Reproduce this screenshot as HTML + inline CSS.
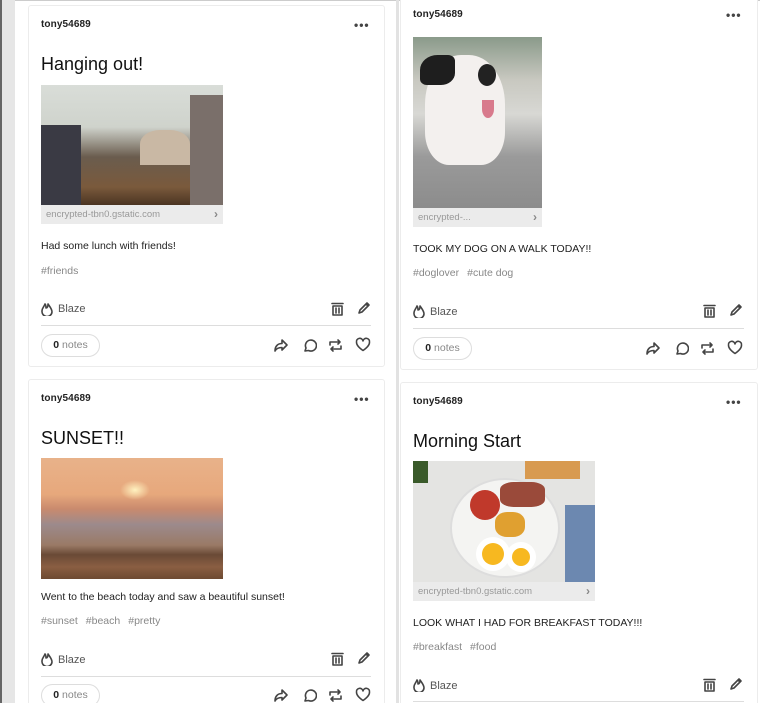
<!DOCTYPE html>
<html><head><meta charset="utf-8"><style>
*{margin:0;padding:0;box-sizing:border-box}
html,body{width:760px;height:703px;overflow:hidden}
body{background:#fff;position:relative;font-family:"Liberation Sans",sans-serif;color:#222}
.a{position:absolute}
.card{position:absolute;background:#fff;border:1px solid #ececec;border-radius:3px}
.user{position:absolute;font-size:10px;font-weight:bold;color:#222;letter-spacing:.1px}
.dots{position:absolute;font-size:12px;font-weight:bold;letter-spacing:1px;color:#444;line-height:6px}
.title{position:absolute;font-size:18px;color:#111}
.txt{position:absolute;font-size:10.5px;color:#222}
.tags{position:absolute;font-size:10.5px;color:#888}
.tags span{margin-right:8px}
.cap{position:absolute;background:#ebebeb;color:#999;font-size:9.5px;padding-left:5px;line-height:19px}
.cap b{position:absolute;right:5px;top:0;color:#888;font-weight:bold;font-size:12px}
.blaze{position:absolute;font-size:11px;color:#555;line-height:14px}
.hr{position:absolute;height:1px;background:#ddd}
.pill{position:absolute;width:59px;height:23px;border:1px solid #ddd;border-radius:12px;font-size:10.5px;color:#888;text-align:center;line-height:21px}
.pill b{color:#222}
svg{position:absolute;fill:none;stroke:#444;stroke-width:1.6;stroke-linecap:round;stroke-linejoin:round}
</style></head><body>
<div class="a" style="left:0;top:0;width:2px;height:703px;background:#666"></div>
<div class="a" style="left:2px;top:0;width:13px;height:703px;background:#e6e6e6"></div>
<div class="a" style="left:15px;top:0;width:745px;height:1px;background:#ccc"></div>
<div class="a" style="left:396px;top:0;width:3px;height:703px;background:#e2e2e2"></div>

<!-- Card 1 -->
<div class="card" style="left:28px;top:5px;width:357px;height:362px"></div>
<div class="user" style="left:41px;top:19px">tony54689</div>
<div class="dots" style="left:354px;top:22px">•••</div>
<div class="title" style="left:41px;top:54px">Hanging out!</div>
<div class="a" style="left:41px;top:85px;width:182px;height:120px;background:linear-gradient(180deg,#d9ddd8 0%,#cfd3cc 35%,#6a5c4e 60%,#7a5a3c 85%,#4b3422 100%)"></div>
<div class="a" style="left:41px;top:125px;width:40px;height:80px;background:#3a3a44"></div>
<div class="a" style="left:190px;top:95px;width:33px;height:110px;background:#7a6f6a"></div>
<div class="a" style="left:140px;top:130px;width:50px;height:35px;background:#c9b8a4;border-radius:40% 40% 0 0"></div>
<div class="cap" style="left:41px;top:205px;width:182px;height:19px">encrypted-tbn0.gstatic.com<b>›</b></div>
<div class="txt" style="left:41px;top:240px">Had some lunch with friends!</div>
<div class="tags" style="left:41px;top:265px"><span>#friends</span></div>
<svg style="left:41px;top:302px" width="13" height="14" viewBox="0 0 13 14"><path d="M4 2C3 5 1 6 1 9a5 5 0 0 0 10 1c0-3-2-5-4-8c0 3-1 4-2 4C5 5 5 3 4 2Z"/></svg>
<div class="blaze" style="left:58px;top:302px">Blaze</div>
<svg style="left:331px;top:302px" width="13" height="14" viewBox="0 0 13 14"><path d="M1 1.5h11M2 4h9v9H2zM5 6v5M8 6v5"/></svg>
<svg style="left:357px;top:301px" width="14" height="14" viewBox="0 0 14 14"><path d="M2 12l1-3 7-7 2 2-7 7zM9 3l2 2"/></svg>
<div class="hr" style="left:41px;top:325px;width:330px"></div>
<div class="pill" style="left:41px;top:334px"><b>0</b> notes</div>
<svg style="left:273px;top:338px" width="16" height="15" viewBox="0 0 16 15"><path d="M9 2l5 5-5 5V9.5C5 9.5 3 11 2 13c0-5 3-7.5 7-7.5z"/></svg>
<svg style="left:302px;top:338px" width="15" height="15" viewBox="0 0 15 15"><path d="M3 13l1-3A5.5 5.5 0 1 1 6.5 12.5z"/></svg>
<svg style="left:328px;top:338px" width="15" height="15" viewBox="0 0 15 15"><path d="M2 7V4h10M10 2l2 2-2 2M13 8v3H3M5 13l-2-2 2-2"/></svg>
<svg style="left:355px;top:337px" width="16" height="15" viewBox="0 0 16 15"><path d="M8 13.5S1.5 9.5 1.5 5.2A3.3 3.3 0 0 1 8 4a3.3 3.3 0 0 1 6.5 1.2C14.5 9.5 8 13.5 8 13.5z"/></svg>

<!-- Card 2 left -->
<div class="card" style="left:28px;top:379px;width:357px;height:330px"></div>
<div class="user" style="left:41px;top:393px">tony54689</div>
<div class="dots" style="left:354px;top:396px">•••</div>
<div class="title" style="left:41px;top:428px">SUNSET!!</div>
<div class="a" style="left:41px;top:458px;width:182px;height:121px;background:linear-gradient(180deg,#e8b28a 0%,#e7a87c 30%,#c98a6e 42%,#9c8a8c 55%,#9a7a66 72%,#6a4a36 80%,#8a5e42 90%,#6d4a32 100%)"></div>
<div class="a" style="left:120px;top:480px;width:30px;height:20px;border-radius:50%;background:radial-gradient(#fff2c0,rgba(255,210,140,0) 70%)"></div>
<div class="txt" style="left:41px;top:591px">Went to the beach today and saw a beautiful sunset!</div>
<div class="tags" style="left:41px;top:615px"><span>#sunset</span><span>#beach</span><span>#pretty</span></div>
<svg style="left:41px;top:652px" width="13" height="14" viewBox="0 0 13 14"><path d="M4 2C3 5 1 6 1 9a5 5 0 0 0 10 1c0-3-2-5-4-8c0 3-1 4-2 4C5 5 5 3 4 2Z"/></svg>
<div class="blaze" style="left:58px;top:653px">Blaze</div>
<svg style="left:331px;top:652px" width="13" height="14" viewBox="0 0 13 14"><path d="M1 1.5h11M2 4h9v9H2zM5 6v5M8 6v5"/></svg>
<svg style="left:357px;top:651px" width="14" height="14" viewBox="0 0 14 14"><path d="M2 12l1-3 7-7 2 2-7 7zM9 3l2 2"/></svg>
<div class="hr" style="left:41px;top:676px;width:330px"></div>
<div class="pill" style="left:41px;top:684px"><b>0</b> notes</div>
<svg style="left:273px;top:688px" width="16" height="15" viewBox="0 0 16 15"><path d="M9 2l5 5-5 5V9.5C5 9.5 3 11 2 13c0-5 3-7.5 7-7.5z"/></svg>
<svg style="left:302px;top:688px" width="15" height="15" viewBox="0 0 15 15"><path d="M3 13l1-3A5.5 5.5 0 1 1 6.5 12.5z"/></svg>
<svg style="left:328px;top:688px" width="15" height="15" viewBox="0 0 15 15"><path d="M2 7V4h10M10 2l2 2-2 2M13 8v3H3M5 13l-2-2 2-2"/></svg>
<svg style="left:355px;top:687px" width="16" height="15" viewBox="0 0 16 15"><path d="M8 13.5S1.5 9.5 1.5 5.2A3.3 3.3 0 0 1 8 4a3.3 3.3 0 0 1 6.5 1.2C14.5 9.5 8 13.5 8 13.5z"/></svg>

<!-- Card 1 right -->
<div class="card" style="left:400px;top:-5px;width:358px;height:375px"></div>
<div class="user" style="left:413px;top:9px">tony54689</div>
<div class="dots" style="left:726px;top:12px">•••</div>
<div class="a" style="left:413px;top:37px;width:129px;height:171px;background:linear-gradient(180deg,#8a9a8a 0%,#c8c8c0 25%,#d8d8d4 45%,#9a9a9a 70%,#8c8c8c 100%)"></div>
<div class="a" style="left:425px;top:55px;width:80px;height:110px;background:#f3f0ee;border-radius:45% 45% 30% 30%"></div>
<div class="a" style="left:478px;top:64px;width:18px;height:22px;background:#222;border-radius:50%"></div>
<div class="a" style="left:420px;top:55px;width:35px;height:30px;background:#1e1e1e;border-radius:50% 20% 40% 20%"></div>
<div class="a" style="left:482px;top:100px;width:12px;height:18px;background:#d87a8c;border-radius:0 0 50% 50%"></div>
<div class="cap" style="left:413px;top:208px;width:129px;height:19px">encrypted-...<b>›</b></div>
<div class="txt" style="left:413px;top:243px">TOOK MY DOG ON A WALK TODAY!!</div>
<div class="tags" style="left:413px;top:267px"><span>#doglover</span><span>#cute dog</span></div>
<svg style="left:413px;top:304px" width="13" height="14" viewBox="0 0 13 14"><path d="M4 2C3 5 1 6 1 9a5 5 0 0 0 10 1c0-3-2-5-4-8c0 3-1 4-2 4C5 5 5 3 4 2Z"/></svg>
<div class="blaze" style="left:430px;top:305px">Blaze</div>
<svg style="left:703px;top:304px" width="13" height="14" viewBox="0 0 13 14"><path d="M1 1.5h11M2 4h9v9H2zM5 6v5M8 6v5"/></svg>
<svg style="left:729px;top:303px" width="14" height="14" viewBox="0 0 14 14"><path d="M2 12l1-3 7-7 2 2-7 7zM9 3l2 2"/></svg>
<div class="hr" style="left:413px;top:328px;width:331px"></div>
<div class="pill" style="left:413px;top:337px"><b>0</b> notes</div>
<svg style="left:645px;top:341px" width="16" height="15" viewBox="0 0 16 15"><path d="M9 2l5 5-5 5V9.5C5 9.5 3 11 2 13c0-5 3-7.5 7-7.5z"/></svg>
<svg style="left:674px;top:341px" width="15" height="15" viewBox="0 0 15 15"><path d="M3 13l1-3A5.5 5.5 0 1 1 6.5 12.5z"/></svg>
<svg style="left:700px;top:341px" width="15" height="15" viewBox="0 0 15 15"><path d="M2 7V4h10M10 2l2 2-2 2M13 8v3H3M5 13l-2-2 2-2"/></svg>
<svg style="left:727px;top:340px" width="16" height="15" viewBox="0 0 16 15"><path d="M8 13.5S1.5 9.5 1.5 5.2A3.3 3.3 0 0 1 8 4a3.3 3.3 0 0 1 6.5 1.2C14.5 9.5 8 13.5 8 13.5z"/></svg>

<!-- Card 2 right -->
<div class="card" style="left:400px;top:382px;width:358px;height:330px"></div>
<div class="user" style="left:413px;top:396px">tony54689</div>
<div class="dots" style="left:726px;top:399px">•••</div>
<div class="title" style="left:413px;top:431px">Morning Start</div>
<div class="a" style="left:413px;top:461px;width:182px;height:121px;background:#e4e4e2;overflow:hidden">
<div class="a" style="left:37px;top:17px;width:110px;height:100px;border-radius:50%;background:#f4f4f2;border:2px solid #ddd"></div>
<div class="a" style="left:57px;top:29px;width:30px;height:30px;border-radius:50%;background:#c0392b"></div>
<div class="a" style="left:87px;top:21px;width:45px;height:25px;background:#9a4a3a;border-radius:30%"></div>
<div class="a" style="left:82px;top:51px;width:30px;height:25px;background:#e0a030;border-radius:40%"></div>
<div class="a" style="left:69px;top:82px;width:22px;height:22px;border-radius:50%;background:#f7b820;box-shadow:0 0 0 6px #fff"></div>
<div class="a" style="left:99px;top:87px;width:18px;height:18px;border-radius:50%;background:#f7b820;box-shadow:0 0 0 6px #fff"></div>
<div class="a" style="left:152px;top:44px;width:30px;height:77px;background:#6c88b0"></div>
<div class="a" style="left:112px;top:0;width:55px;height:18px;background:#d89a50"></div>
<div class="a" style="left:0;top:0;width:15px;height:22px;background:#3a5a2a"></div>
</div>
<div class="cap" style="left:413px;top:582px;width:182px;height:19px">encrypted-tbn0.gstatic.com<b>›</b></div>
<div class="txt" style="left:413px;top:617px">LOOK WHAT I HAD FOR BREAKFAST TODAY!!!</div>
<div class="tags" style="left:413px;top:641px"><span>#breakfast</span><span>#food</span></div>
<svg style="left:413px;top:678px" width="13" height="14" viewBox="0 0 13 14"><path d="M4 2C3 5 1 6 1 9a5 5 0 0 0 10 1c0-3-2-5-4-8c0 3-1 4-2 4C5 5 5 3 4 2Z"/></svg>
<div class="blaze" style="left:430px;top:679px">Blaze</div>
<svg style="left:703px;top:678px" width="13" height="14" viewBox="0 0 13 14"><path d="M1 1.5h11M2 4h9v9H2zM5 6v5M8 6v5"/></svg>
<svg style="left:729px;top:677px" width="14" height="14" viewBox="0 0 14 14"><path d="M2 12l1-3 7-7 2 2-7 7zM9 3l2 2"/></svg>
<div class="hr" style="left:413px;top:701px;width:331px"></div>
</body></html>
